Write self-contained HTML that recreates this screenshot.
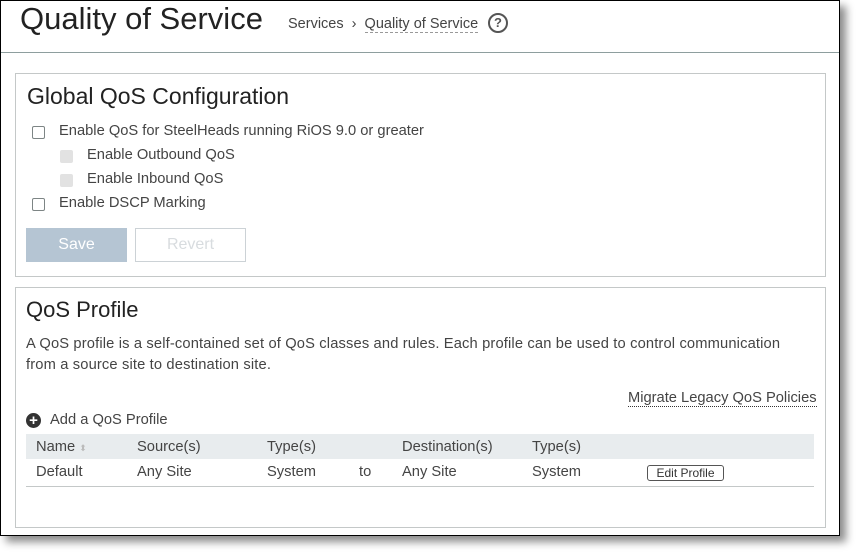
<!DOCTYPE html>
<html><head><style>
body{margin:0;width:856px;height:552px;background:#fff;position:relative;overflow:hidden;font-family:"Liberation Sans",sans-serif;color:#333}
.frame{position:absolute;left:0;top:0;width:838px;height:534px;border:1px solid #000;background:#fff;box-shadow:6px 6px 8px rgba(0,0,0,.45)}
.a{position:absolute;white-space:nowrap}
.panel{position:absolute;border:1px solid #c4c8c8;background:#fff}
.cb{position:absolute;width:11px;height:11px;border:1px solid #7d8585;border-radius:2px;background:#fff}
.cb.d{border-color:#e2e2e2;background:#e2e2e2}
.t{font-size:14.7px;color:#444}
</style></head><body>
<div class="frame">
<div class="a" style="left:19px;top:0px;font-size:31px;color:#222">Quality of Service</div>
<div class="a" style="left:287px;top:15px;font-size:14.5px;color:#444">Services &nbsp;›&nbsp; <span style="border-bottom:1px dashed #999">Quality of Service</span></div>
<div class="a" style="left:487px;top:12px;border:2px solid #555;border-radius:50%;font-size:13px;font-weight:bold;color:#555;text-align:center;line-height:16px;box-sizing:border-box;width:20px;height:20px">?</div>
<div class="a" style="left:0;top:51px;width:838px;height:1px;background:#8e9e9e"></div>

<div class="panel" style="left:14px;top:72px;width:809px;height:202px">
<div class="a" style="left:11px;top:9px;font-size:23px;color:#222">Global QoS Configuration</div>
<div class="cb" style="left:16px;top:52px"></div><div class="a t" style="left:43px;top:49px">Enable QoS for SteelHeads running RiOS 9.0 or greater</div>
<div class="cb d" style="left:44px;top:76px"></div><div class="a t" style="left:71px;top:73px">Enable Outbound QoS</div>
<div class="cb d" style="left:44px;top:100px"></div><div class="a t" style="left:71px;top:97px">Enable Inbound QoS</div>
<div class="cb" style="left:16px;top:124px"></div><div class="a t" style="left:43px;top:121px">Enable DSCP Marking</div>
<div class="a" style="left:10px;top:154px;width:101px;height:34px;background:#b5c5d3;color:#fff;font-size:16px;text-align:center;line-height:34px">Save</div>
<div class="a" style="left:119px;top:154px;width:109px;height:32px;border:1px solid #ccd2d6;color:#d8dcdf;font-size:16px;text-align:center;line-height:32px">Revert</div>
</div>

<div class="panel" style="left:14px;top:286px;width:809px;height:239px">
<div class="a" style="left:10px;top:9px;font-size:22px;color:#222">QoS Profile</div>
<div class="a t" style="left:10px;top:46px;line-height:21px;letter-spacing:0.15px">A QoS profile is a self-contained set of QoS classes and rules. Each profile can be used to control communication<br>from a source site to destination site.</div>
<div class="a t" style="left:612px;top:102px;border-bottom:1px dotted #333">Migrate Legacy QoS Policies</div>
<div class="a" style="left:10px;top:125px;width:15px;height:15px;border-radius:50%;background:#333;color:#fff;font-size:15px;font-weight:bold;text-align:center;line-height:15px">+</div>
<div class="a t" style="left:34px;top:124px">Add a QoS Profile</div>
<div class="a" style="left:10px;top:146px;width:788px;height:25px;background:#e8ecee"></div>
<div class="a t" style="left:20px;top:151px">Name <span style="color:#bbb;font-size:9px">⬍</span></div>
<div class="a t" style="left:121px;top:151px">Source(s)</div>
<div class="a t" style="left:251px;top:151px">Type(s)</div>
<div class="a t" style="left:386px;top:151px">Destination(s)</div>
<div class="a t" style="left:516px;top:151px">Type(s)</div>
<div class="a t" style="left:20px;top:176px">Default</div>
<div class="a t" style="left:121px;top:176px">Any Site</div>
<div class="a t" style="left:251px;top:176px">System</div>
<div class="a t" style="left:343px;top:176px">to</div>
<div class="a t" style="left:386px;top:176px">Any Site</div>
<div class="a t" style="left:516px;top:176px">System</div>
<div class="a" style="left:631px;top:177px;width:75px;height:14px;border:1px solid #555;border-radius:3px;font-size:12px;color:#333;text-align:center;line-height:14px">Edit Profile</div>
<div class="a" style="left:10px;top:198px;width:788px;height:1px;background:#c4c8c8"></div>
</div>
</div>
</body></html>
